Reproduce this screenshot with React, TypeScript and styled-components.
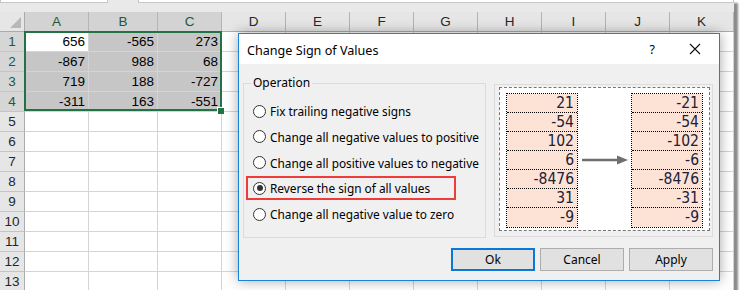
import styled, { createGlobalStyle } from 'styled-components';

const GlobalStyle = createGlobalStyle`
  body {
    margin: 0;
    background: #ffffff;
    overflow: hidden;
  }
`;

const columns = [
  { name: 'A', width: 64 },
  { name: 'B', width: 69 },
  { name: 'C', width: 64 },
  { name: 'D', width: 64 },
  { name: 'E', width: 64 },
  { name: 'F', width: 64 },
  { name: 'G', width: 64 },
  { name: 'H', width: 64 },
  { name: 'I', width: 64 },
  { name: 'J', width: 64 },
  { name: 'K', width: 64 },
];

const sheetData: number[][] = [
  [656, -565, 273],
  [-867, 988, 68],
  [719, 188, -727],
  [-311, 163, -551],
];

const options = [
  'Fix trailing negative signs',
  'Change all negative values to positive',
  'Change all positive values to negative',
  'Reverse the sign of all values',
  'Change all negative value to zero',
];

const before = ['21', '-54', '102', '6', '-8476', '31', '-9'];
const after = ['-21', '-54', '-102', '-6', '-8476', '-31', '-9'];

export default function App() {
  const rows = Array.from({ length: 13 }, (_, i) => i + 1);
  return (
    <>
      <GlobalStyle />
      <Frame>
        <FormulaBar>
          <NameBox />
          <FormulaBox />
        </FormulaBar>
        <Sheet>
          <Corner />
          {columns.map((c, i) => (
            <ColHeader key={c.name} $selected={i < 3}>
              {c.name}
            </ColHeader>
          ))}
          {rows.map((r) => (
            <RowGroup key={r}>
              <RowHeader $selected={r <= 4}>{r}</RowHeader>
              {columns.map((c, ci) => {
                const value = r <= 4 && ci < 3 ? sheetData[r - 1][ci] : undefined;
                return (
                  <Cell key={c.name} $fill={value !== undefined && !(r === 1 && ci === 0)}>
                    {value}
                  </Cell>
                );
              })}
            </RowGroup>
          ))}
        </Sheet>
        <Selection>
          <FillHandle />
        </Selection>

        <Dialog>
          <TitleBar>
            <Title>Change Sign of Values</Title>
            <TitleButtons>
              <HelpMark>?</HelpMark>
              <svg width="12" height="12" viewBox="0 0 12 12">
                <path d="M1 1 L11 11 M11 1 L1 11" stroke="#111" strokeWidth="1.1" />
              </svg>
            </TitleButtons>
          </TitleBar>
          <Body>
            <Content>
              <GroupBox>
                <Legend>Operation</Legend>
                <RadioList>
                  {options.map((o, i) => (
                    <RadioRow key={o} $highlight={i === 3}>
                      <RadioCircle $checked={i === 3} />
                      <span>{o}</span>
                    </RadioRow>
                  ))}
                </RadioList>
              </GroupBox>
              <PreviewPanel>
                <PreviewInner>
                  <PreviewColumn>
                    {before.map((v, i) => (
                      <PreviewCell key={i}>{v}</PreviewCell>
                    ))}
                  </PreviewColumn>
                  <svg width="46" height="10" viewBox="0 0 46 10">
                    <path d="M0 5 H36" stroke="#6f6f6f" strokeWidth="2.5" />
                    <path d="M35 0.5 L46 5 L35 9.5 Z" fill="#6f6f6f" />
                  </svg>
                  <PreviewColumn>
                    {after.map((v, i) => (
                      <PreviewCell key={i}>{v}</PreviewCell>
                    ))}
                  </PreviewColumn>
                </PreviewInner>
              </PreviewPanel>
            </Content>
            <ButtonRow>
              <DialogButton $primary>Ok</DialogButton>
              <DialogButton>Cancel</DialogButton>
              <DialogButton>Apply</DialogButton>
            </ButtonRow>
          </Body>
        </Dialog>
      </Frame>
    </>
  );
}

const Frame = styled.div`
  position: relative;
  width: 734px;
  height: 290px;
  overflow: hidden;
  background: #ffffff;
  box-shadow: 4px 3px 2px #8c8c8c;
  font-family: 'Liberation Sans', Arial, sans-serif;
`;

const FormulaBar = styled.div`
  display: flex;
  gap: 30px;
  height: 12px;
  background: #e9e9e9;
`;

const NameBox = styled.div`
  width: 106px;
  height: 2px;
  background: #ffffff;
  border: 1px solid #c6c6c6;
  border-top: none;
`;

const FormulaBox = styled.div`
  flex: 1;
  height: 2px;
  background: #ffffff;
  border: 1px solid #c6c6c6;
  border-top: none;
`;

const Sheet = styled.div`
  display: grid;
  grid-template-columns: 25px ${columns.map((c) => `${c.width}px`).join(' ')};
  grid-auto-rows: 20px;
  font-size: 13.5px;
  color: #000;
`;

const RowGroup = styled.div`
  display: contents;
`;

const Corner = styled.div`
  background: #e6e6e6;
  border-right: 1px solid #ababab;
  border-bottom: 1px solid #ababab;
  position: relative;
  &::after {
    content: '';
    position: absolute;
    right: 3px;
    bottom: 3px;
    border-style: solid;
    border-width: 0 0 11px 11px;
    border-color: transparent transparent #b8b8b8 transparent;
  }
`;

const ColHeader = styled.div<{ $selected?: boolean }>`
  display: flex;
  align-items: center;
  justify-content: center;
  background: ${(p) => (p.$selected ? '#d3d3d3' : '#e6e6e6')};
  color: ${(p) => (p.$selected ? '#1f5a37' : '#262626')};
  border-right: 1px solid #b5b5b5;
  border-bottom: 1px solid #ababab;
  font-size: 13.5px;
`;

const RowHeader = styled.div<{ $selected?: boolean }>`
  display: flex;
  align-items: center;
  justify-content: center;
  background: ${(p) => (p.$selected ? '#d6d6d6' : '#e6e6e6')};
  color: ${(p) => (p.$selected ? '#1f5a37' : '#262626')};
  border-right: 1px solid #ababab;
  border-bottom: 1px solid #c4c4c4;
  font-size: 13.5px;
`;

const Cell = styled.div<{ $fill?: boolean }>`
  display: flex;
  align-items: center;
  justify-content: flex-end;
  padding-right: 3px;
  background: ${(p) => (p.$fill ? '#c6c6c6' : '#ffffff')};
  border-right: 1px solid #d4d4d4;
  border-bottom: 1px solid #d4d4d4;
`;

const Selection = styled.div`
  position: absolute;
  left: 24px;
  top: 31px;
  width: 198px;
  height: 80px;
  border: 2px solid #217346;
  box-sizing: border-box;
  pointer-events: none;
`;

const FillHandle = styled.div`
  position: absolute;
  right: -4px;
  bottom: -5px;
  width: 6px;
  height: 6px;
  background: #217346;
  border: 1px solid #ffffff;
  border-right: none;
  border-bottom: none;
`;

const Dialog = styled.div`
  position: absolute;
  left: 238px;
  top: 33px;
  width: 482px;
  height: 248px;
  box-sizing: border-box;
  border: 1px solid #1883d7;
  background: #f0f0f0;
  box-shadow: 0 0 12px rgba(0, 0, 0, 0.35);
  display: flex;
  flex-direction: column;
  font-family: 'Segoe UI', 'Noto Sans', 'Liberation Sans', sans-serif;
  font-size: 11.85px;
  color: #000;
`;

const TitleBar = styled.div`
  height: 30px;
  background: #ffffff;
  display: flex;
  align-items: center;
  justify-content: space-between;
  padding: 0 18px 0 8px;
`;

const Title = styled.div`
  font-size: 12.6px;
  padding-top: 2px;
`;

const TitleButtons = styled.div`
  display: flex;
  align-items: center;
  gap: 34px;
`;

const HelpMark = styled.span`
  font-size: 12.5px;
`;

const Body = styled.div`
  flex: 1;
  display: flex;
  flex-direction: column;
  padding: 11px 6px 9px 4px;
`;

const Content = styled.div`
  display: flex;
  gap: 8px;
  height: 163px;
`;

const GroupBox = styled.fieldset`
  margin: 0;
  width: 243px;
  box-sizing: border-box;
  border: 1px solid #dcdcdc;
  padding: 8px 2px 0 2px;
`;

const Legend = styled.legend`
  padding: 0 2px;
  margin-left: 5px;
  line-height: 16px;
  font-size: 12px;
`;

const RadioList = styled.div`
  display: flex;
  flex-direction: column;
  gap: 1.75px;
`;

const RadioRow = styled.div<{ $highlight?: boolean }>`
  display: flex;
  align-items: center;
  gap: 4px;
  height: 24px;
  box-sizing: border-box;
  width: ${(p) => (p.$highlight ? '210px' : 'auto')};
  padding-left: 5px;
  border: 2px solid ${(p) => (p.$highlight ? '#f03b3b' : 'transparent')};
  white-space: nowrap;
`;

const RadioCircle = styled.span<{ $checked?: boolean }>`
  width: 13px;
  height: 13px;
  box-sizing: border-box;
  border-radius: 50%;
  border: 1px solid #333;
  background: #fff;
  display: flex;
  align-items: center;
  justify-content: center;
  flex-shrink: 0;
  &::after {
    content: '';
    width: 6px;
    height: 6px;
    border-radius: 50%;
    background: ${(p) => (p.$checked ? '#333' : 'transparent')};
  }
`;

const PreviewPanel = styled.div`
  width: 219px;
  margin: 9px 0 1px;
  box-sizing: border-box;
  border: 1px solid #dcdcdc;
  padding: 2px 2px 5px 4px;
  display: flex;
`;

const PreviewInner = styled.div`
  flex: 1;
  background: #ffffff;
  border: 1px dashed #777;
  padding: 5px 6px 3px 6px;
  display: flex;
  align-items: center;
  justify-content: space-between;
`;

const PreviewColumn = styled.div`
  width: 72px;
  align-self: flex-start;
  display: flex;
  flex-direction: column;
  border: 1px dotted #000;
  box-sizing: border-box;
`;

const PreviewCell = styled.div`
  height: 19px;
  box-sizing: border-box;
  background: #fde2d6;
  border-bottom: 1px dotted #000;
  text-align: right;
  padding-right: 3px;
  font-family: 'Liberation Sans Narrow', 'DejaVu Sans Condensed', 'Liberation Sans', sans-serif;
  font-size: 15.5px;
  line-height: 19px;
  color: #202038;
  &:last-child {
    border-bottom: none;
  }
`;

const ButtonRow = styled.div`
  display: flex;
  justify-content: flex-end;
  gap: 5px;
  margin-top: 10px;
`;

const DialogButton = styled.button<{ $primary?: boolean }>`
  width: 84px;
  height: 23px;
  box-sizing: border-box;
  font-family: inherit;
  font-size: 12px;
  color: #000;
  background: #e1e1e1;
  border: ${(p) => (p.$primary ? '2px solid #0a78d7' : '1px solid #adadad')};
  padding: 0;
`;
